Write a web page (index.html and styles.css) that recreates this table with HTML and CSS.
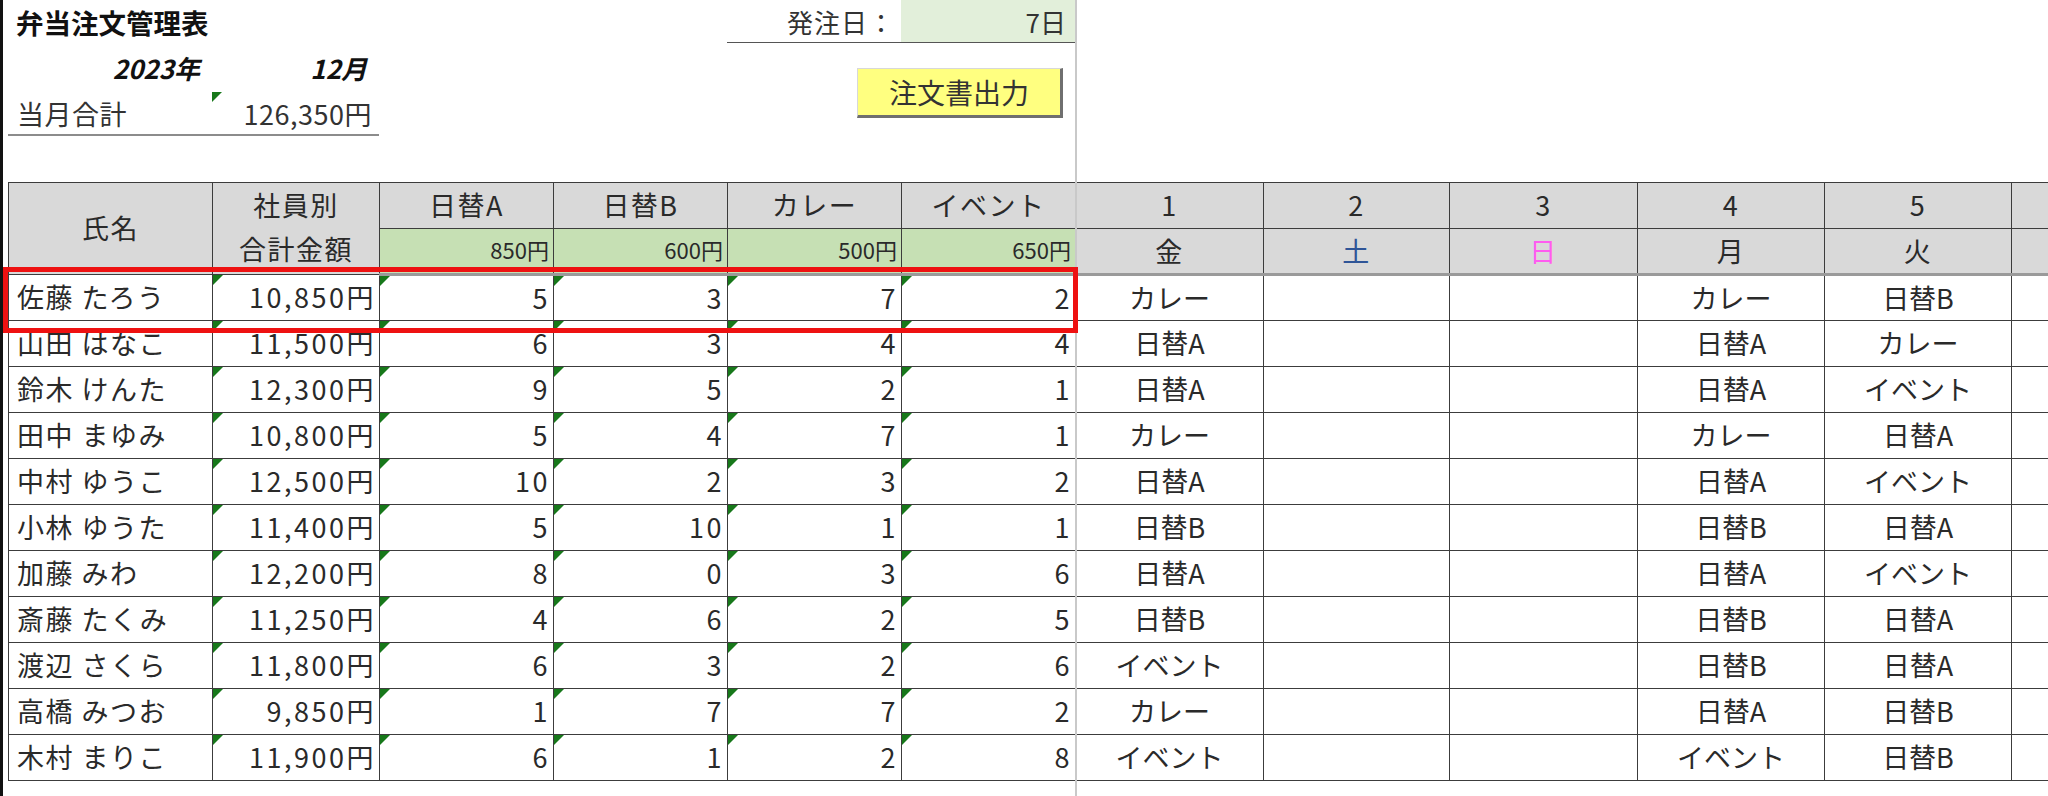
FILE: index.html
```html
<!DOCTYPE html>
<html lang="ja">
<head>
<meta charset="utf-8">
<title>弁当注文管理表</title>
<link rel="stylesheet" href="styles.css">
</head>
<body>
<div class="sheet">
  <div class="top">
    <div class="title">弁当注文管理表</div>
    <div class="order-label">発注日：</div>
    <div class="order-value">7日</div>
    <div class="year">2023年</div>
    <div class="month">12月</div>
    <button class="btn">注文書出力</button>
    <div class="total-label">当月合計</div>
    <div class="total-value tri">126,350円</div>
  </div>

  <div class="table-wrap">
    <table class="grid">
      <colgroup>
        <col class="c-name"><col class="c-sum">
        <col class="c-num"><col class="c-num"><col class="c-num"><col class="c-num">
        <col class="c-day1"><col class="c-day2"><col class="c-day3"><col class="c-day4"><col class="c-day5"><col class="c-rest">
      </colgroup>
      <thead>
        <tr class="h1">
          <th rowspan="2" class="hd">氏名</th>
          <th rowspan="2" class="hd two">社員別<br>合計金額</th>
          <th class="hd">日替A</th>
          <th class="hd">日替B</th>
          <th class="hd">カレー</th>
          <th class="hd">イベント</th>
          <th class="hd">1</th>
          <th class="hd">2</th>
          <th class="hd">3</th>
          <th class="hd">4</th>
          <th class="hd">5</th>
          <th class="hd"></th>
        </tr>
        <tr class="h2">
          <th class="price">850円</th>
          <th class="price">600円</th>
          <th class="price">500円</th>
          <th class="price">650円</th>
          <th class="hd">金</th>
          <th class="hd sat">土</th>
          <th class="hd sun">日</th>
          <th class="hd">月</th>
          <th class="hd">火</th>
          <th class="hd"></th>
        </tr>
      </thead>
      <tbody>
        <tr><td class="name">佐藤 たろう</td><td class="num tri">10,850円</td><td class="num tri">5</td><td class="num tri">3</td><td class="num tri">7</td><td class="num tri">2</td><td class="meal">カレー</td><td class="meal"></td><td class="meal"></td><td class="meal">カレー</td><td class="meal">日替B</td><td></td></tr>
        <tr><td class="name">山田 はなこ</td><td class="num tri">11,500円</td><td class="num tri">6</td><td class="num tri">3</td><td class="num tri">4</td><td class="num tri">4</td><td class="meal">日替A</td><td class="meal"></td><td class="meal"></td><td class="meal">日替A</td><td class="meal">カレー</td><td></td></tr>
        <tr><td class="name">鈴木 けんた</td><td class="num tri">12,300円</td><td class="num tri">9</td><td class="num tri">5</td><td class="num tri">2</td><td class="num tri">1</td><td class="meal">日替A</td><td class="meal"></td><td class="meal"></td><td class="meal">日替A</td><td class="meal">イベント</td><td></td></tr>
        <tr><td class="name">田中 まゆみ</td><td class="num tri">10,800円</td><td class="num tri">5</td><td class="num tri">4</td><td class="num tri">7</td><td class="num tri">1</td><td class="meal">カレー</td><td class="meal"></td><td class="meal"></td><td class="meal">カレー</td><td class="meal">日替A</td><td></td></tr>
        <tr><td class="name">中村 ゆうこ</td><td class="num tri">12,500円</td><td class="num tri">10</td><td class="num tri">2</td><td class="num tri">3</td><td class="num tri">2</td><td class="meal">日替A</td><td class="meal"></td><td class="meal"></td><td class="meal">日替A</td><td class="meal">イベント</td><td></td></tr>
        <tr><td class="name">小林 ゆうた</td><td class="num tri">11,400円</td><td class="num tri">5</td><td class="num tri">10</td><td class="num tri">1</td><td class="num tri">1</td><td class="meal">日替B</td><td class="meal"></td><td class="meal"></td><td class="meal">日替B</td><td class="meal">日替A</td><td></td></tr>
        <tr><td class="name">加藤 みわ</td><td class="num tri">12,200円</td><td class="num tri">8</td><td class="num tri">0</td><td class="num tri">3</td><td class="num tri">6</td><td class="meal">日替A</td><td class="meal"></td><td class="meal"></td><td class="meal">日替A</td><td class="meal">イベント</td><td></td></tr>
        <tr><td class="name">斎藤 たくみ</td><td class="num tri">11,250円</td><td class="num tri">4</td><td class="num tri">6</td><td class="num tri">2</td><td class="num tri">5</td><td class="meal">日替B</td><td class="meal"></td><td class="meal"></td><td class="meal">日替B</td><td class="meal">日替A</td><td></td></tr>
        <tr><td class="name">渡辺 さくら</td><td class="num tri">11,800円</td><td class="num tri">6</td><td class="num tri">3</td><td class="num tri">2</td><td class="num tri">6</td><td class="meal">イベント</td><td class="meal"></td><td class="meal"></td><td class="meal">日替B</td><td class="meal">日替A</td><td></td></tr>
        <tr><td class="name">高橋 みつお</td><td class="num tri">9,850円</td><td class="num tri">1</td><td class="num tri">7</td><td class="num tri">7</td><td class="num tri">2</td><td class="meal">カレー</td><td class="meal"></td><td class="meal"></td><td class="meal">日替A</td><td class="meal">日替B</td><td></td></tr>
        <tr><td class="name">木村 まりこ</td><td class="num tri">11,900円</td><td class="num tri">6</td><td class="num tri">1</td><td class="num tri">2</td><td class="num tri">8</td><td class="meal">イベント</td><td class="meal"></td><td class="meal"></td><td class="meal">イベント</td><td class="meal">日替B</td><td></td></tr>
      </tbody>
    </table>
    <div class="highlight"></div>
  </div>

  <div class="pane-divider"></div>
</div>
</body>
</html>
```

FILE: styles.css
```css
html, body {
  margin: 0;
  padding: 0;
  background: #ffffff;
  overflow: hidden;
}

body {
  font-family: "Noto Sans CJK JP", "Noto Sans", sans-serif;
  color: #262626;
}

.sheet {
  position: relative;
  width: 2048px;
  height: 796px;
  box-sizing: border-box;
  border-left: 3px solid #111111;
  padding-left: 5px;
  overflow: hidden;
}

/* ---------- top block ---------- */
.top {
  display: grid;
  grid-template-columns: 204px 167px 174px 174px 174px 174px;
  grid-template-rows: 43px 49px 44px 46px;
  font-size: 26px;
}

.title {
  grid-column: 1 / 3;
  grid-row: 1;
  align-self: center;
  padding-left: 8px;
  font-size: 27.5px;
  font-weight: 700;
  color: #111;
}

.order-label {
  grid-column: 5;
  grid-row: 1;
  display: flex;
  align-items: center;
  justify-content: flex-end;
  padding-right: 6px;
  border-bottom: 1px solid #555;
  font-size: 26px;
  letter-spacing: 1px;
  color: #333;
}

.order-value {
  grid-column: 6;
  grid-row: 1;
  display: flex;
  align-items: center;
  justify-content: flex-end;
  padding-right: 9px;
  background: #e2efda;
  border-bottom: 1px solid #555;
  font-size: 26px;
  color: #333;
}

.year, .month {
  grid-row: 2;
  display: flex;
  align-items: center;
  justify-content: flex-end;
  padding-right: 12px;
  font-size: 26px;
  font-weight: 700;
  font-style: italic;
  color: #111;
}
.year { grid-column: 1; }
.month { grid-column: 2; }

.btn {
  grid-column: 5 / 7;
  grid-row: 2 / 4;
  justify-self: end;
  align-self: start;
  margin-top: 25px;
  margin-right: 12px;
  width: 206px;
  height: 50px;
  background: #ffff80;
  border: 1px solid #d8d8d8;
  border-right: 3px solid #6f6f6f;
  border-bottom: 3px solid #6f6f6f;
  font-family: inherit;
  font-size: 28px;
  color: #333;
  padding: 0;
}

.total-label, .total-value {
  grid-row: 3;
  display: flex;
  align-items: center;
  border-bottom: 2px solid #8c8c8c;
  color: #333;
}
.total-label {
  grid-column: 1;
  padding-left: 9px;
  font-size: 27px;
  letter-spacing: 0.5px;
}
.total-value {
  grid-column: 2;
  justify-content: flex-end;
  padding-right: 7px;
  position: relative;
  font-size: 27px;
  letter-spacing: 0.5px;
}

/* ---------- table ---------- */
.table-wrap {
  position: relative;
}

.grid {
  table-layout: fixed;
  border-collapse: collapse;
  width: 2103px;
  font-size: 27px;
  color: #2a2a2a;
}

.c-name { width: 204px; }
.c-sum { width: 167px; }
.c-num { width: 174px; }
.c-day1 { width: 188px; }
.c-day2 { width: 186px; }
.c-day3 { width: 188px; }
.c-day4 { width: 187px; }
.c-day5 { width: 187px; }
.c-rest { width: 100px; }

.grid th, .grid td {
  border: 1px solid #3c3c3c;
  padding: 0;
  height: 46px;
  box-sizing: border-box;
  white-space: nowrap;
  overflow: hidden;
  line-height: 1.2;
}

.grid th {
  font-weight: 400;
  letter-spacing: 1.5px;
}

.hd {
  background: #d9d9d9;
  text-align: center;
}

.two {
  line-height: 44px !important;
  vertical-align: top;
}

.price {
  background: #c6e0b4;
  text-align: right;
  padding-right: 4px !important;
  padding-bottom: 3px !important;
  font-size: 22px;
  letter-spacing: 0 !important;
  vertical-align: middle;
}

.h2 th {
  border-bottom: 3px solid #9a9a9a;
}

.sat { color: #2f5597; }
.sun { color: #ff5cf0; }

.name {
  text-align: left;
  padding-left: 8px !important;
  letter-spacing: 1.5px;
}

.num {
  text-align: right;
  padding-right: 3px !important;
  letter-spacing: 2.5px;
}

.meal {
  text-align: center;
}

.tri {
  position: relative;
}
.tri::before {
  content: "";
  position: absolute;
  left: 0;
  top: 0;
  width: 0;
  height: 0;
  border-top: 10px solid #17781a;
  border-right: 10px solid transparent;
}

/* red highlight frame over the first data row */
.highlight {
  position: absolute;
  left: -5px;
  top: 85px;
  width: 1075px;
  height: 66px;
  box-sizing: border-box;
  border: 5px solid #ee1111;
  pointer-events: none;
  z-index: 3;
}

/* frozen pane divider */
.pane-divider {
  position: absolute;
  top: 0;
  left: 1072px;
  width: 2px;
  height: 796px;
  background: #c9c9c9;
  z-index: 2;
}
```
